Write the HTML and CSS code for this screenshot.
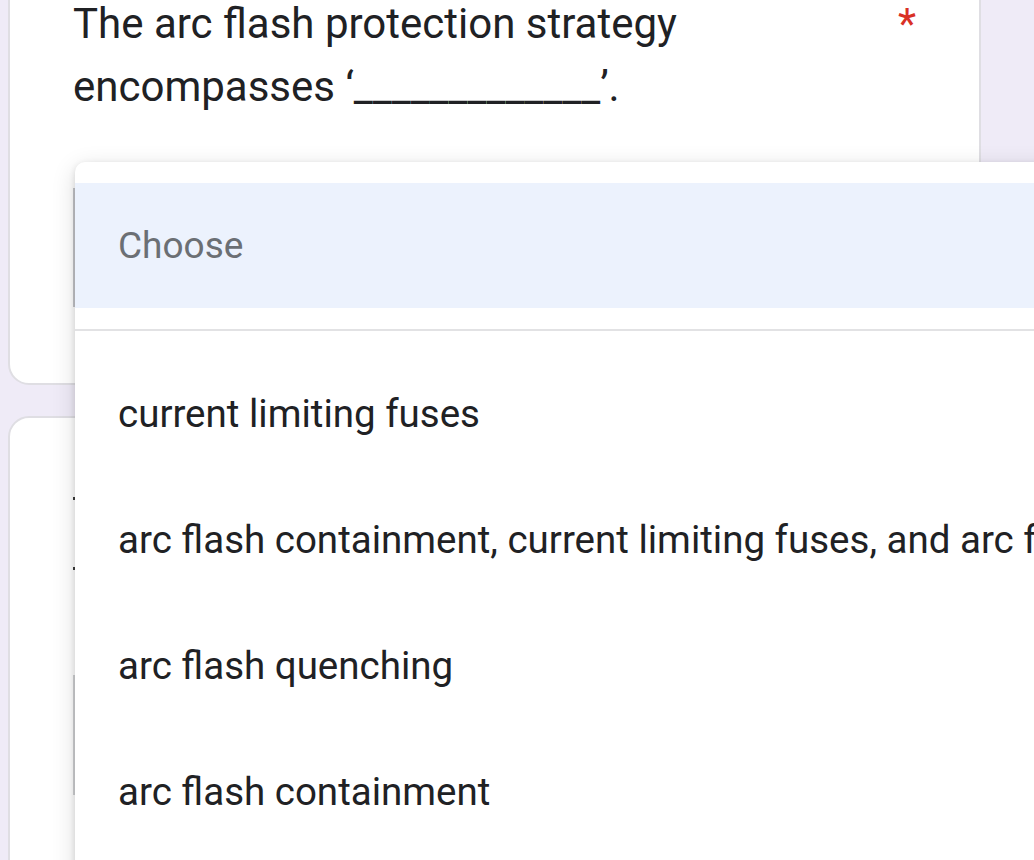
FILE: index.html
```html
<!DOCTYPE html>
<html lang="en">
<head>
<meta charset="utf-8">
<title>Form question</title>
<link rel="stylesheet" href="styles.css">
</head>
<body>
<div class="page">
  <section class="card card-first">
    <div class="q-head">
      <div class="q-title">The arc flash protection strategy encompasses ‘_____________’.</div>
      <span class="req">*</span>
    </div>
    <div class="select-box"></div>
  </section>

  <section class="card card-second">
    <span class="tick"></span>
    <span class="tick tick-2"></span>
    <div class="select-box select-box-2"></div>
  </section>

  <div class="menu" role="listbox">
    <div class="menu-item menu-choose">Choose</div>
    <div class="menu-divider"></div>
    <div class="menu-item">current limiting fuses</div>
    <div class="menu-item">arc flash containment, current limiting fuses, and arc flash quenching</div>
    <div class="menu-item">arc flash quenching</div>
    <div class="menu-item">arc flash containment</div>
  </div>
</div>
</body>
</html>
```

FILE: styles.css
```css
html, body {
  margin: 0;
  padding: 0;
}

body {
  background: #efebf7;
  font-family: Roboto, "Noto Sans", Arial, sans-serif;
  color: #202124;
  width: 1034px;
  height: 860px;
  overflow: hidden;
}

.page {
  position: relative;
  display: flow-root;
  width: 1034px;
  height: 860px;
  padding-left: 8px;
  box-sizing: border-box;
}

.card {
  width: 973px;
  box-sizing: border-box;
  background: #ffffff;
  border: 2px solid #dfdee3;
  border-radius: 21px;
  padding-left: 63px;
  padding-right: 63px;
}

.card-first {
  margin-top: -40px;
  padding-top: 30px;
  height: 425px;
  display: flex;
  flex-direction: column;
}

.q-head {
  display: flex;
  align-items: flex-start;
  gap: 20px;
}

.q-title {
  flex: 1;
  font-size: 42px;
  line-height: 63px;
  color: #202124;
}

.req {
  font-size: 42px;
  line-height: 63px;
  color: #d93025;
}

.select-box {
  margin-top: 70px;
  height: 119px;
  width: 300px;
  border-left: 2px solid #c4c5c9;
  box-sizing: border-box;
}

.card-second {
  margin-top: 31px;
  height: 600px;
  padding-top: 79px;
  display: flex;
  flex-direction: column;
  align-items: flex-start;
}

.tick {
  display: block;
  width: 2px;
  height: 3px;
  background: #3c3c3c;
}

.tick-2 {
  margin-top: 67px;
}

.select-box-2 {
  margin-top: 105px;
  height: 120px;
  border-left-color: #cfd0d3;
}

.menu {
  position: absolute;
  left: 75px;
  top: 162px;
  width: 1100px;
  height: 760px;
  background: #ffffff;
  border-radius: 10px 0 0 0;
  padding-top: 21px;
  box-sizing: border-box;
  box-shadow: 0 2px 6px rgba(0, 0, 0, 0.12), 0 6px 24px rgba(0, 0, 0, 0.14);
}

.menu-item {
  height: 126px;
  display: flex;
  align-items: center;
  padding-left: 43px;
  font-size: 38.5px;
  color: #202124;
  white-space: nowrap;
}

.menu-choose {
  background: #ecf2fd;
  color: #6b6f74;
  font-size: 37px;
  height: 125px;
}

.menu-divider {
  height: 2px;
  background: #e2e2e4;
  margin-top: 21px;
  margin-bottom: 19px;
}
```
